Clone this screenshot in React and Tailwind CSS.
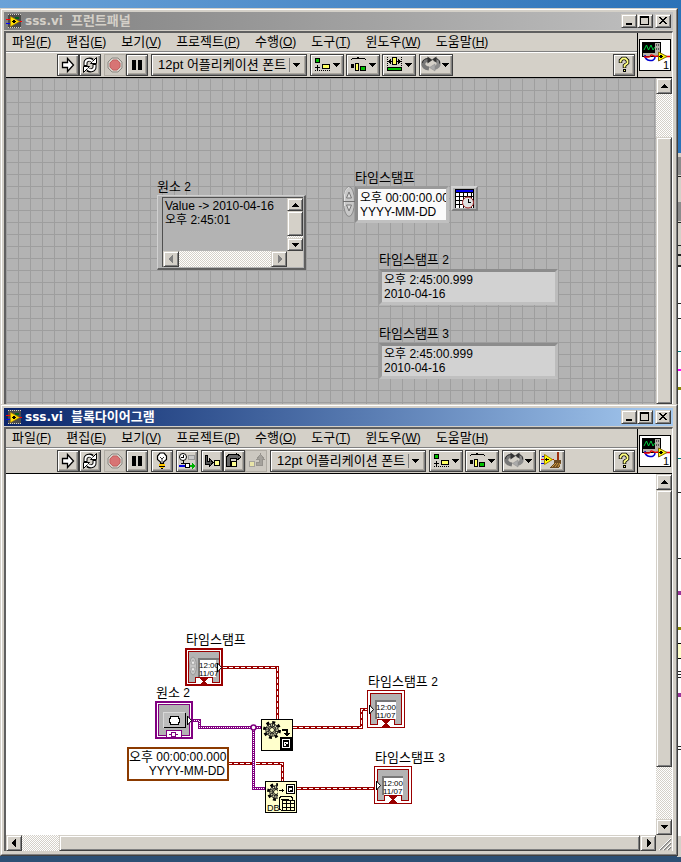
import React from "react";

const raised =
  "bg-[#d4d0c8] border border-[#d4d0c8] border-r-[#404040] border-b-[#404040] shadow-[inset_1px_1px_0_#fff,inset_-1px_-1px_0_#808080]";
const dither =
  "bg-[conic-gradient(#fff_25%,#d4d0c8_0_50%,#fff_0_75%,#d4d0c8_0)] bg-[length:2px_2px]";
const tool =
  "flex h-[22px] shrink-0 items-center justify-center border border-[#404040] bg-[#d4d0c8] shadow-[inset_1px_1px_0_#fff,inset_-1px_-1px_0_#808080,inset_-2px_-2px_0_#aaa69e]";
const toolOff =
  "flex h-[22px] shrink-0 items-center justify-center border border-[#b0aca4] bg-[#ccc8c0]";

/* Hangul is set one size larger than the Latin letters beside it. */
function Txt({ children }) {
  return String(children)
    .split(/([\uac00-\ud7a3]+)/)
    .map((part, i) =>
      /[\uac00-\ud7a3]/.test(part) ? (
        <span key={i} className="text-[13px]">{part}</span>
      ) : (
        part
      )
    );
}

function Arrow({ dir = "up", color = "#000" }) {
  const d = {
    up: "M4 0h1v1h1v1h1v1h1v1H1V3h1V2h1V1h1z",
    down: "M1 0h7v1H7v1H6v1H5v1H4V3H3V2H2V1H1z",
    left: "M5 0v8H4V7H3V6H2V5H1V3h1V2h1V1h1V0z",
    right: "M2 0h1v1h1v1h1v1h1v2H5v1H4v1H3v1H2z",
  }[dir];
  const tall = dir === "left" || dir === "right";
  return (
    <svg width={tall ? 7 : 9} height={tall ? 8 : 4} viewBox={tall ? "0 0 7 8" : "0 0 9 4"} shapeRendering="crispEdges">
      <path d={d} fill={color} />
    </svg>
  );
}

function ScrollButton({ dir, color, small }) {
  return (
    <button
      type="button"
      aria-label={dir}
      className={`${raised} flex shrink-0 items-center justify-center ${small ? "h-[13px] w-4" : "size-4"}`}
    >
      <Arrow dir={dir} color={color} />
    </button>
  );
}

function Pic({ w = 20, h = 20, children }) {
  return (
    <svg width={w} height={h} viewBox={`0 0 ${w} ${h}`} fill="none" shapeRendering="crispEdges" className="shrink-0">
      {children}
    </svg>
  );
}

const Run = () => (
  <Pic>
    <path d="M4.500 7.500h5v-4l6 6.500-6 6.500v-4h-5z" fill="#fff" stroke="#000" strokeWidth="1.300" shapeRendering="auto" />
  </Pic>
);
const Loop = () => (
  <Pic>
    <g shapeRendering="auto">
      <path d="M5.500 11V8c0-3 4-4.500 7-2.500" stroke="#000" strokeWidth="4" />
      <path d="M14.500 9v3c0 3-4 4.500-7 2.500" stroke="#000" strokeWidth="4" />
      <path d="M10.500 8.500h6v-6z" fill="#fff" stroke="#000" />
      <path d="M9.500 11.500h-6v6z" fill="#fff" stroke="#000" />
      <path d="M5.500 10V8c0-3 4-4.500 7-1.500" stroke="#fff" strokeWidth="2" />
      <path d="M14.500 10v2c0 3-4 4.500-7 1.500" stroke="#fff" strokeWidth="2" />
    </g>
  </Pic>
);
const Stop = () => (
  <Pic>
    <path d="M7 3h6l4 4v6l-4 4H7l-4-4V7z" stroke="#8c8984" fill="#d4d0c8" shapeRendering="auto" />
    <path d="M8 5h4l3 3v4l-3 3H8l-3-3V8z" fill="#d87474" stroke="#c46060" shapeRendering="auto" />
  </Pic>
);
const Pause = () => (
  <Pic>
    <path d="M5 5h4v10H5zM11 5h4v10h-4z" fill="#000" />
  </Pic>
);
const Bulb = () => (
  <Pic>
    <path d="M8.500 12.500v-1.500L5.500 8.500V5l2.500-3h4l2.500 3v3.500L11.500 11v1.500z" fill="#fff" stroke="#000" strokeWidth="1.200" shapeRendering="auto" />
    <path d="M8 6l2 2 2-2M10 8v4" stroke="#000" strokeWidth=".8" shapeRendering="auto" />
    <path d="M7 13h6v2H7zM8 16h4v1H8z" fill="#ffc800" />
    <path d="M7 15h6v1H7zM9 17h2v1H9z" fill="#000" />
  </Pic>
);
const Retain = () => (
  <Pic>
    <circle cx="6" cy="6" r="3.500" fill="#fff" stroke="#000" shapeRendering="auto" />
    <path d="M4 6h2V4M6 9v4M4 12.500h4" stroke="#000" />
    <path d="M11.500 4.500h6v4h-6z" fill="#c8c8c8" stroke="#999" />
    <path d="M2 14h6v2H2z" fill="#0000e0" />
    <path d="M8.500 12.500h4v4h-4z" fill="#fff" stroke="#000" />
    <path d="M13 14h2v-2h1v1h1v1h1v2h-1v1h-1v1h-1v-2h-2z" fill="#00b000" />
  </Pic>
);
const StepInto = () => (
  <Pic>
    <path d="M3 4h2v6h2V7l4 4.500L7 16v-3H3z" fill="#555" stroke="#000" />
    <path d="M12.500 9.500h5v5h-5z" fill="#ffff90" stroke="#000" />
  </Pic>
);
const StepOver = () => (
  <Pic>
    <path d="M2.500 15V6L5 3.500h7V2l5 4-5 4V7.500H6V15z" fill="#666" stroke="#000" />
    <path d="M7.500 10.500h5v5h-5z" fill="#ffff90" stroke="#000" />
  </Pic>
);
const StepOut = () => (
  <Pic>
    <path d="M10 14h6V8h2l-3.500-5L11 8h2v3h-3z" fill="#a5a29c" stroke="#96938d" />
    <path d="M3.500 10.500h5v5h-5z" fill="#e8e4a8" stroke="#a5a29c" />
  </Pic>
);
const Drop = () => <path d="M22 8h7v1h-1v1h-1v1h-1v1h-1v-1h-1v-1h-1V9h-1z" fill="#000" />;
const Align = () => (
  <Pic w={32}>
    <path d="M4 3h5v5H4z" fill="#000" />
    <path d="M5 4h3v3H5z" fill="#00c000" />
    <path d="M11.500 9.500h7v4h-7z" fill="#ffff60" stroke="#000" />
    <path d="M6 10h1v5H6zM4 12h5v1H4z" fill="#000" />
    <path d="M4 15.500h16" stroke="#000" strokeDasharray="1 1" />
    <Drop />
  </Pic>
);
const Distribute = () => (
  <Pic w={32}>
    <path d="M4 4h1V3h5V2h2v1h6v1h1v1h-1V4H5v1H4z" fill="#000" />
    <path d="M4 9h3v4H4z" fill="#000" />
    <path d="M8.500 8.500h3v7h-3z" fill="#ffff60" stroke="#000" />
    <path d="M13.500 11.500h5v4h-5z" fill="#00c000" stroke="#000" />
    <Drop />
  </Pic>
);
const Resize = () => (
  <Pic w={32}>
    <path d="M4.500 2v10M18.500 2v10" stroke="#000" strokeDasharray="1 1" />
    <path d="M5 6h4v1H5zM14 6h4v1h-4zM6 5h1v3H6zM7 4h1v5H7zM16 5h1v3h-1zM15 4h1v5h-1z" fill="#000" />
    <path d="M9.500 2.500h4v7h-4z" fill="#ffff60" stroke="#000" />
    <path d="M4.500 12.500h14v3h-14z" fill="#00c000" stroke="#000" />
    <Drop />
  </Pic>
);
const Reorder = () => (
  <Pic w={32}>
    <g shapeRendering="auto">
      <path d="M9 13.500C1 12 2 5.500 8 5" stroke="#777" strokeWidth="4" />
      <path d="M7.500 1.500v7l5-3.500z" fill="#333" />
      <path d="M14 4.500c6 1 6.500 7 0 8.500" stroke="#8c8c8c" strokeWidth="4" />
      <path d="M15 9v7l-5.500-3.500z" fill="#aaa" stroke="#888" strokeWidth=".5" />
      <path d="M16.500 1.500v6l-4.500-3z" fill="#333" />
      <path d="M2.500 8c0-3 3-4.500 5.500-4.500M16 3.500c3 1 4 3 3.500 5" stroke="#333" />
    </g>
    <Drop />
  </Pic>
);
const CleanUp = () => (
  <Pic w={24}>
    <path d="M2 5h3v1H2zM1 12h4v1H1z" fill="#0000e0" />
    <path d="M1 8h4v1H1zM11 8h3v1h-3z" fill="#e00000" />
    <path d="M4.500 3.500l8 5-8 5z" fill="#ffff00" stroke="#a08000" shapeRendering="auto" />
    <path d="M5 8h4v1H5zM6 7h1v3H6z" fill="#000" />
    <path d="M17 1h2v8h-2z" fill="#a03010" />
    <path d="M14 9h7v3l-2 5H9l5-4z" fill="#6b4a20" />
    <path d="M12 16l4-4M15 16l3-4M18 16l2-4" stroke="#d09a40" shapeRendering="auto" />
  </Pic>
);
const Help = () => (
  <Pic>
    <path d="M6.500 8V5.500l2-2h3l2 2V8l-3 2.500V13" stroke="#000" strokeWidth="3.500" shapeRendering="auto" />
    <path d="M6.500 7.500V5.500l2-2h3l2 2V8l-3 2.500v2" stroke="#ffff80" strokeWidth="1.800" shapeRendering="auto" />
    <path d="M9.500 14.500h2v2h-2z" fill="#ffff80" stroke="#000" />
  </Pic>
);

function AppIcon() {
  return (
    <svg width="16" height="14" viewBox="0 0 16 14" shapeRendering="crispEdges" aria-hidden="true">
      <path d="M2 0h13v14H2z" fill="#4a4a4a" />
      <path d="M2 .5h13M2 13.500h13" stroke="#d4d0c8" strokeDasharray="1 1" />
      <path d="M0 5h5v1H0zM12 7h4v1h-4z" fill="#f00" />
      <path d="M0 9h5v1H0z" fill="#00f" />
      <path d="M9 3h4v2H9z" fill="#006020" />
      <path d="M4.500 2.500l9 5-9 5z" fill="#ffe000" stroke="#b08000" strokeWidth=".6" shapeRendering="auto" />
      <path d="M6 7h4v1H6zM7 6h2v3H7z" fill="#000" />
    </svg>
  );
}

function ViIcon() {
  return (
    <svg width="32" height="32" viewBox="0 0 32 32" shapeRendering="crispEdges" role="img" aria-label="VI">
      <path d="M.5.5h31v31H.5z" fill="#fff" stroke="#000" />
      <path d="M3.500 3.500h18v14h-18z" fill="#b4b0a8" stroke="#000" />
      <path d="M4 4h12v10H4z" fill="#000" />
      <path d="M5 11l2.500-5 2 5 2.500-5 2 5 2-3" stroke="#00d040" fill="none" shapeRendering="auto" />
      <path d="M17 5h1v2h-1zM19 5h1v2h-1zM17 9h1v2h-1zM19 9h1v2h-1z" fill="#555" />
      <path d="M6 16c0 7 10 7 10 2" stroke="#0000d0" strokeWidth="1.500" fill="none" shapeRendering="auto" />
      <path d="M5 18h5c2 0 1-3 3-2s2 2 6 1M27 17.500h4" stroke="#f00000" strokeWidth="1.300" fill="none" shapeRendering="auto" />
      <path d="M19.500 13l8.500 4.500-8.500 4.500z" fill="#ffff00" stroke="#806000" shapeRendering="auto" />
      <path d="M20 17h4v1h-4zM21 16h2v3h-2z" fill="#000" />
      <text x="24" y="30" fontFamily="Liberation Sans, sans-serif" fontSize="11" fill="#000">1</text>
    </svg>
  );
}

const names = {
  run: ["실행", Run, "w-[22px]"],
  loop: ["연속 실행", Loop, "w-[22px]"],
  stop: ["강제 종료", Stop, "w-[22px]"],
  pause: ["일시 정지", Pause, "w-[22px]"],
  bulb: ["실행 하이라이트", Bulb, "w-[22px]"],
  retain: ["와이어 값 유지", Retain, "w-[22px]"],
  into: ["단계 입력", StepInto, "w-[22px]"],
  over: ["단계 통과", StepOver, "w-[22px]"],
  out: ["단계 출력", StepOut, "w-[22px]"],
  align: ["객체 정렬", Align, "w-[34px]"],
  distribute: ["객체 분산", Distribute, "w-[34px]"],
  resize: ["객체 크기", Resize, "w-[34px]"],
  reorder: ["순서 바꾸기", Reorder, "w-[34px]"],
  clean: ["정리", CleanUp, "w-[26px]"],
  help: ["도움말", Help, "w-[22px]"],
};

function Tool({ id }) {
  const [label, Icon, width] = names[id];
  const off = id === "stop" || id === "out";
  return (
    <button type="button" aria-label={label} disabled={off} className={`${off ? toolOff : tool} ${width}`}>
      <Icon />
    </button>
  );
}

function FontSelect() {
  return (
    <div className={`${tool} relative w-[156px]`}>
      <select aria-label="폰트" className="h-full w-full appearance-none bg-transparent pl-[6px] text-[13px] leading-[18px] outline-none">
        <option>12pt 어플리케이션 폰트</option>
      </select>
      <span className="pointer-events-none absolute top-[3px] right-[3px] flex h-[14px] w-[14px] items-center justify-center border-l border-[#808080]">
        <Arrow dir="down" />
      </span>
    </div>
  );
}

const menus = [
  ["파일", "F"], ["편집", "E"], ["보기", "V"], ["프로젝트", "P"],
  ["수행", "O"], ["도구", "T"], ["윈도우", "W"], ["도움말", "H"],
];

function TitleButton({ label, children }) {
  return (
    <button type="button" aria-label={label} className={`${raised} flex h-[14px] w-4 items-center justify-center`}>
      <svg width="10" height="10" viewBox="0 0 10 10" fill="#000" shapeRendering="crispEdges" className="shrink-0">
        {children}
      </svg>
    </button>
  );
}

function Window({ kind, active, groups, open, children }) {
  return (
    <section
      className={`relative mr-[3px] border-t border-r border-l border-t-[#d4d0c8] border-r-[#404040] border-l-[#d4d0c8] bg-[#d4d0c8] ${open ? "" : "border-b border-b-[#404040]"}`}
    >
      <div className={`border-t border-r border-l border-t-white border-r-[#808080] border-l-white pt-[2px] pr-[3px] pl-[2px] ${open ? "" : "border-b border-b-[#808080] pb-[3px]"}`}>
        <header
          className={`flex h-[18px] items-center pr-[2px] pl-[2px] ${active ? "bg-linear-to-r from-[#0a246a] to-[#a6caf0] text-white" : "bg-linear-to-r from-[#808080] to-[#c0c0c0] text-[#d4d0c8]"}`}
        >
          <AppIcon />
          <h1 className="ml-[3px] flex flex-1 items-center gap-2 font-['DejaVu_Sans','Noto_Sans_CJK_KR',sans-serif] text-[12px] leading-[18px] font-bold whitespace-nowrap">
            <span>sss.vi</span>
            <span className="text-[13px]">{kind}</span>
          </h1>
          <TitleButton label="최소화"><path d="M2 7h6v2H2z" /></TitleButton>
          <TitleButton label="최대화"><path fillRule="evenodd" d="M0 0h9v9H0zM1 2v6h7V2z" /></TitleButton>
          <span className="w-[2px]" />
          <TitleButton label="닫기">
            <path d="M1 1h2v1h1v1h2V2h1V1h2v1H8v1H7v1H6v1h1v1h1v1h1v1H7V7H6V6H4v1H3v1H1V7h1V6h1V5h1V4H3V3H2V2H1z" />
          </TitleButton>
        </header>
        <div className="mt-px border-t-2 border-r border-l-2 border-t-[#606060] border-r-white border-l-[#606060]">
          <div className="flex border-b border-black">
            <div className="min-w-0 flex-1">
              <nav className="flex h-[19px] items-center gap-[15px] border-b border-[#808080] pl-[6px]">
                {menus.map(([name, key]) => (
                  <button type="button" key={key} className="leading-[16px] whitespace-nowrap">
                    <Txt>{name}</Txt>(<u>{key}</u>)
                  </button>
                ))}
              </nav>
              <div className="flex h-[25px] items-center gap-[3px] border-t border-white pr-[2px] pl-[51px]">
                {groups.map((g, i) => (
                  <div key={i} className={`flex ${g[0] === "align" ? "gap-[2px]" : ""}`}>
                    {g.map((id) => (id === "font" ? <FontSelect key={id} /> : <Tool key={id} id={id} />))}
                  </div>
                ))}
                <div className="ml-auto"><Tool id="help" /></div>
              </div>
            </div>
            <div className="w-[35px] shrink-0 border-l border-black pt-[6px] pl-px">
              <ViIcon />
            </div>
          </div>
          {children}
        </div>
      </div>
    </section>
  );
}

const sunkArea = "block resize-none overflow-hidden whitespace-pre text-[12px] leading-[14px] outline-none";

function Indicator({ id, label, value, className }) {
  return (
    <div className={`absolute ${className}`}>
      <label htmlFor={id} className="block leading-[16px]"><Txt>{label}</Txt></label>
      <div className="mt-[1px] w-[179px] border-[3px] border-t-[#8c8c8c] border-r-[#bcbcbc] border-b-[#c0c0c0] border-l-[#9c9c9c]">
        <textarea id={id} readOnly rows={2} defaultValue={value} className={`${sunkArea} h-[30px] w-full bg-[#d2d2d2] pt-px pl-[2px]`} />
      </div>
    </div>
  );
}

function FrontPanel() {
  return (
    <div className="flex h-[326px]">
      <div className="relative min-w-0 flex-1 overflow-hidden bg-[#b3b3b3] bg-[linear-gradient(#9e9e9e_1px,transparent_1px),linear-gradient(90deg,#9e9e9e_1px,transparent_1px)] bg-[length:12px_12px]">
        <div className="absolute top-[101px] left-[151px]">
          <label htmlFor="element" className="block leading-[16px]"><Txt>원소 2</Txt></label>
          <div className="w-[149px] border border-[#d0d0d0] border-r-2 border-b-2 border-r-[#606060] border-b-[#606060] bg-[#b3b3b3] pt-px pr-px pb-px pl-[4px]">
            <div className="border-t border-l border-[#505050]">
              <div className="flex h-[53px]">
                <textarea id="element" readOnly defaultValue={"Value -> 2010-04-16\n오후 2:45:01"} className={`${sunkArea} h-full min-w-0 flex-1 bg-[#b3b3b3] pt-px pl-[2px]`} />
                <div className={`flex w-4 flex-col ${dither}`}>
                  <ScrollButton dir="up" small />
                  <div className={`${raised} h-[25px]`} />
                  <span className="flex-1" />
                  <ScrollButton dir="down" small />
                </div>
              </div>
              <div className="flex">
                <div className={`flex min-w-0 flex-1 justify-between ${dither}`}>
                  <ScrollButton dir="left" color="#808080" />
                  <ScrollButton dir="right" color="#808080" />
                </div>
                <div className="w-4 bg-[#d4d0c8]" />
              </div>
            </div>
          </div>
        </div>

        <div className="absolute top-[92px] left-[337px] flex flex-col">
          <label htmlFor="stamp" className="ml-[12px] leading-[16px]"><Txt>타임스탬프</Txt></label>
          <div className="flex items-start">
            <button type="button" aria-label="증가 또는 감소">
              <svg width="12" height="31" viewBox="0 0 12 31">
                <ellipse cx="6" cy="15.500" rx="5.500" ry="15" fill="#c8c8c8" stroke="#8a8a8a" />
                <path d="M1.500 20V9C2 5 4 1.500 6 1.500" fill="none" stroke="#e4e4e4" />
                <path d="M0 15.500h12" stroke="#707070" />
                <path d="M3.500 12L6 6l2.500 6zM3.500 19L6 25l2.500-6z" fill="#e0e0e0" stroke="#777" />
              </svg>
            </button>
            <div className="w-[94px] border-[3px] border-t-[#9a9a9a] border-r-[#bdbdbd] border-b-[#c0c0c0] border-l-[#8c8c8c]">
              <textarea id="stamp" defaultValue={"오후 00:00:00.000\nYYYY-MM-DD"} className={`${sunkArea} h-[31px] w-full bg-[#fafafa] pt-[2px] pl-[2px]`} />
            </div>
            <button type="button" aria-label="시간과 날짜 찾아보기" className="ml-[2px] flex h-[25px] w-[27px] items-center justify-center border-2 border-t-[#d4d4d4] border-r-[#808080] border-b-[#808080] border-l-[#d0d0d0] bg-[#b3b3b3]">
              <svg width="19" height="20" viewBox="0 0 19 20" shapeRendering="crispEdges">
                <path d="M0 0h19v19H0z" fill="#000" />
                <path d="M1 1h17v2H1z" fill="#0000f0" />
                <path d="M1 5.500h17M1 9.500h17M1 13.500h17M1 17h17" stroke="#fff" strokeWidth="3" strokeDasharray="3 1" />
                <circle cx="13" cy="13.500" r="5.500" fill="#e0e0e0" stroke="#a02020" shapeRendering="auto" />
                <path d="M13 10h1v3h2v1h-3z" fill="#000" />
              </svg>
            </button>
          </div>
        </div>

        <Indicator id="stamp2" label="타임스탬프 2" value={"오후 2:45:00.999\n2010-04-16"} className="top-[174px] left-[373px]" />
        <Indicator id="stamp3" label="타임스탬프 3" value={"오후 2:45:00.999\n2010-04-16"} className="top-[248px] left-[373px]" />
      </div>
      <div className={`flex w-4 shrink-0 flex-col ${dither}`}>
        <ScrollButton dir="up" />
        <span className="h-[43px]" />
        <div className={`${raised} flex-1`} />
      </div>
    </div>
  );
}

function Wire({ d, color = "#990000", dash = "4 2" }) {
  return (
    <g fill="none" shapeRendering="crispEdges">
      <path d={d} stroke={color} strokeWidth="3" />
      <path d={d} stroke="#fff" strokeWidth="1" strokeDasharray={dash} />
    </g>
  );
}

function Terminal({ control, className }) {
  return (
    <svg width="38" height="38" viewBox="0 0 38 38" className={`absolute ${className}`} shapeRendering="crispEdges">
      <path d="M0 0h38v38H0z" fill="#990000" />
      {control ? <path d="M2 2h34v34H2z" fill="#fff" /> : <path d="M1 1h36v36H1z" fill="#fff" />}
      <path d="M3 3h32v32H3z" fill="#990000" />
      <path d="M4 4h30v30H4z" fill="#b3b3b3" />
      <g transform={control ? "translate(5 0)" : ""}>
        <path d="M8 10h21v2H10v17H8z" fill="#787878" />
        <path d={control ? "M10 12h16v17H10z" : "M10 12h19v17H10z"} fill="#fff" />
        <g fontFamily="Liberation Sans, sans-serif" fontSize="8" fill="#000" shapeRendering="auto">
          <text x="9" y="20">12:00</text>
          <text x="9" y="28">11/07</text>
        </g>
      </g>
      {control ? (
        <>
          <path d="M34 4h1v30h-1z" fill="#990000" />
          <ellipse cx="8" cy="18" rx="3.500" ry="9" fill="#c4c4c4" stroke="#999" shapeRendering="auto" />
          <path d="M8 12l-2 4h4zM8 24l-2-4h4z" fill="#fff" stroke="#888" strokeWidth=".6" shapeRendering="auto" />
          <path d="M32.500 15v9l4-4.500z" fill="#fff" stroke="#000" shapeRendering="auto" />
        </>
      ) : (
        <path d="M2.500 15v9l4-4.500z" fill="#fff" stroke="#000" shapeRendering="auto" />
      )}
      <path d="M10 29h18v6H10z" fill="#990000" />
      <path d={control ? "M11 30h16v6H11z" : "M11 30h16v7H11z"} fill="#fff" />
      <path d="M15 30h8v1h-1v1h-1v1h-1v1h1v1h1v1h1v1h-8v-1h1v-1h1v-1h1v-1h-1v-1h-1v-1h-1z" fill="#990000" />
    </svg>
  );
}

function Gear({ x, y }) {
  return (
    <g shapeRendering="auto" fill="none" transform={`translate(${x} ${y})`}>
      <circle r="7.500" stroke="#000" strokeWidth="3" strokeDasharray="2.900 2.990" />
      <circle r="5" stroke="#222" strokeWidth="3.500" />
      <circle r="5" stroke="#ffffcc" strokeWidth="1.500" strokeDasharray="1 1" />
      <circle r="2.500" fill="#ffffcc" stroke="#000" />
    </g>
  );
}

const nodeLabel = "absolute leading-[16px] whitespace-nowrap";

function Diagram() {
  return (
    <div className="relative min-w-0 flex-1 overflow-hidden bg-white">
      <svg width="650" height="361" viewBox="6 474 650 361" className="absolute top-0 left-0">
        <Wire d="M223 667.500H277.500V719" />
        <Wire d="M228 763.500H252M256 763.500H282.500V781" />
        <Wire d="M293 727.500H361.500V709.500H368" />
        <Wire d="M297 788.500H374" />
        <Wire d="M192 720.500H199.500V727.500H261M253.500 727.500V788.500H265" color="#800080" dash="1 1" />
        <circle cx="253.500" cy="727.500" r="2.500" fill="#fff" stroke="#800080" strokeWidth="1.500" />
      </svg>

      <span className={`${nodeLabel} top-[158px] left-[180px]`}><Txt>타임스탬프</Txt></span>
      <Terminal control className="top-[174px] left-[179px]" />

      <span className={`${nodeLabel} top-[211px] left-[150px]`}><Txt>원소 2</Txt></span>
      <svg width="38" height="38" viewBox="0 0 38 38" className="absolute top-[227px] left-[149px]" shapeRendering="crispEdges">
        <path d="M0 0h38v38H0z" fill="#800080" />
        <path d="M2 2h34v34H2z" fill="#fff" />
        <path d="M3 3h32v32H3z" fill="#800080" />
        <path d="M4 4h30v30H4z" fill="#b3b3b3" />
        <path d="M8 11h22v16H8z" fill="#d8d8d8" />
        <path d="M9 12h21v15H9z" fill="#bcbcbc" />
        <path d="M9 26h21v1H9zM30 12h1v15h-1z" fill="#000" />
        <path d="M14 17h1v-2h9v2h1v5h-1v2h-9v-2h-1z" fill="#000" />
        <path d="M16 16h7v7h-7zM15 18h1v3h-1zM23 18h1v3h-1z" fill="#fff" />
        <path d="M32.500 15v9l4-4.500z" fill="#fff" stroke="#000" shapeRendering="auto" />
        <path d="M11 29h16v7H11z" fill="#800080" />
        <path d="M12 30h14v6H12z" fill="#fff" />
        <path fillRule="evenodd" d="M16 31h5v5h-5zM17 32v3h3v-3zM14 33h2v1h-2zM21 33h2v1h-2z" fill="#800080" />
      </svg>

      <div className="absolute top-[273px] left-[121px] w-[102px] border-2 border-[#8b3a00] bg-white pt-px pr-[2px] pb-px text-right leading-[14px] whitespace-nowrap">
        <div><Txt>오후 00:00:00.000</Txt></div>
        <div>YYYY-MM-DD</div>
      </div>

      <svg width="32" height="32" viewBox="0 0 32 32" className="absolute top-[245px] left-[255px]" shapeRendering="crispEdges">
        <path d="M.5.5h31v31H.5z" fill="#ffffcc" stroke="#000" />
        <Gear x={11} y={11} />
        <path d="M21 10h6v4h2v1h-1v1h-1v1h-2v-1h-1v-1h-1v-1h2v-2h-4z" fill="#000" />
        <path d="M19 18h12v13H19z" fill="#000" />
        <path d="M21 20h8v9h-8z" fill="#fff" />
        <path fillRule="evenodd" d="M22 21h6v7h-6zM23 23v4h4v-4zM24 24h1v1h-1zM25 25h2v2h-2z" fill="#000" />
      </svg>

      <svg width="32" height="32" viewBox="0 0 32 32" className="absolute top-[307px] left-[259px]" shapeRendering="crispEdges">
        <path d="M.5.5h31v31H.5z" fill="#ffffcc" stroke="#000" />
        <svg width="13" height="24" viewBox="0 0 13 24"><Gear x={11} y={11} /></svg>
        <path d="M14 9h5v1h-5zM17 8h1v3h-1z" fill="#000" />
        <path d="M21 3h9v10h-9z" fill="#000" />
        <path d="M22 4h7v8h-7z" fill="#fff" />
        <path fillRule="evenodd" d="M23 5h5v6h-5zM24 7v3h3V7zM25 9h2v1h-2z" fill="#000" />
        <path d="M14.500 28V17l2-2h9l2 2v2M14.500 28l2 1.500h2M16 18h8" fill="none" stroke="#000" />
        <path d="M17 19h13v11H17z" fill="#000" />
        <path d="M18 20h3v2h-3zM22 20h3v2h-3zM26 20h3v2h-3zM18 23h3v3h-3zM22 23h3v3h-3zM26 23h3v3h-3zM18 27h3v2h-3zM22 27h3v2h-3zM26 27h3v2h-3z" fill="#ffffcc" />
        <text x="2" y="30" fontFamily="Liberation Sans, sans-serif" fontSize="9" fill="#000">DB</text>
      </svg>

      <span className={`${nodeLabel} top-[200px] left-[362px]`}><Txt>타임스탬프 2</Txt></span>
      <Terminal className="top-[216px] left-[361px]" />
      <span className={`${nodeLabel} top-[276px] left-[369px]`}><Txt>타임스탬프 3</Txt></span>
      <Terminal className="top-[292px] left-[368px]" />
    </div>
  );
}

function BlockDiagram() {
  return (
    <>
      <div className="flex h-[361px]">
        <Diagram />
        <div className={`flex w-4 shrink-0 flex-col ${dither}`}>
          <ScrollButton dir="up" />
          <div className={`${raised} h-[277px]`} />
          <span className="flex-1" />
          <ScrollButton dir="down" />
        </div>
      </div>
      <div className={`flex h-4 ${dither}`}>
        <ScrollButton dir="left" />
        <span className="w-[37px]" />
        <div className={`${raised} flex-1`} />
        <ScrollButton dir="right" />
        <div className="w-4 bg-[#d4d0c8]">
          <svg width="16" height="16" viewBox="0 0 16 16">
            <path d="M4 15L15 4M8 15l7-7M12 15l3-3" stroke="#808080" strokeWidth="1.500" />
            <path d="M3 15L15 3M7 15l8-8M11 15l4-4" stroke="#fff" />
          </svg>
        </div>
      </div>
    </>
  );
}

/* Edge of a window lying behind the two in front. */
function BehindWindow() {
  return (
    <svg width="4" height="704" viewBox="0 0 4 704" className="absolute top-[153px] right-0" shapeRendering="crispEdges" aria-hidden="true">
      <path d="M0 0h4v704H0z" fill="#fff" />
      <path d="M0 0h4v113H0z" fill="#d4d0c8" />
      <path d="M0 4h4v18H0zM0 49h4v19H0z" fill="#8c8c8c" />
      <path d="M0 23h4v1H0zM0 69h4v1H0zM0 92h4v1H0zM0 101h4v2H0zM0 112h4v2H0zM0 150h4v1H0zM0 165h4v1H0zM0 339h4v1H0zM0 405h4v1H0zM0 518h4v1H0zM0 521h4v1H0zM0 524h4v1H0zM0 593h4v1H0zM0 596h4v1H0z" fill="#222" />
      <path d="M0 198h4v1H0zM0 305h4v1H0z" fill="#008080" />
      <path d="M0 216h4v2H0z" fill="#ff00ff" />
      <path d="M0 234h4v3H0zM0 474h4v3H0z" fill="#8a8a00" />
      <path d="M0 438h4v4H0zM0 540h4v4H0z" fill="#993399" />
      <path d="M0 490h4v15H0z" fill="#ffffcc" stroke="#000" />
      <path d="M0 683h4v21H0z" fill="#d4d0c8" />
    </svg>
  );
}

export default function App() {
  return (
    <main className="relative min-h-screen bg-[#2c4f74] bg-linear-to-r from-[#6aa2d8] to-[#2a72b8] bg-[length:100%_153px] bg-no-repeat pt-2 font-['Liberation_Sans','Noto_Sans_CJK_KR',sans-serif] text-[12px] text-black">
      <BehindWindow />
      <Window
        kind="프런트패널"
        open
        groups={[["run", "loop"], ["stop", "pause"], ["font"], ["align", "distribute", "resize"], ["reorder"]]}
      >
        <FrontPanel />
      </Window>
      <Window
        kind="블록다이어그램"
        active
        groups={[["run", "loop"], ["stop", "pause"], ["bulb"], ["retain"], ["into", "over", "out"], ["font"], ["align", "distribute"], ["reorder"], ["clean"]]}
      >
        <BlockDiagram />
      </Window>
    </main>
  );
}
